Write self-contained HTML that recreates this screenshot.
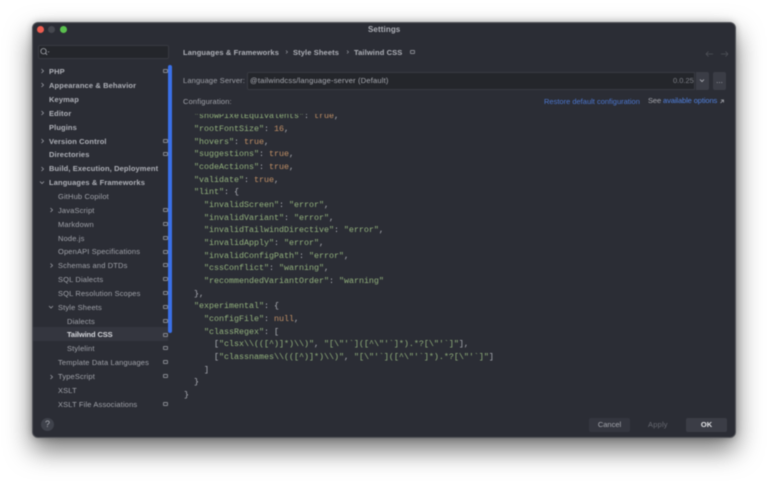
<!DOCTYPE html>
<html><head><meta charset="utf-8"><style>
html,body{margin:0;padding:0;width:768px;height:481px;overflow:hidden;background:#fff}
*{box-sizing:border-box}
#win{position:absolute;left:32px;top:22px;width:704px;height:416px;background:#2b2d35;border-radius:6px;box-shadow:0 12px 26px rgba(0,0,0,.55),0 0 8px rgba(0,0,0,.25);border:1px solid #55575c;overflow:hidden}
#root{position:absolute;left:0;top:0;width:768px;height:481px;filter:blur(.45px);font-family:"Liberation Sans",sans-serif}
.t{position:absolute;white-space:pre;font-size:7.5px;line-height:12px;color:#a8aab1}
.b{font-weight:bold;letter-spacing:.12px;color:#aeb0b7}
.s{letter-spacing:.15px;color:#a0a2a9}
.dot{position:absolute;width:7px;height:7px;border-radius:50%;top:26px}
.m{position:absolute;width:5px;height:4px;border:1px solid #85878e;border-radius:1px;left:163px}
svg{position:absolute;overflow:visible}
#code{position:absolute;font-family:"Liberation Mono",monospace;font-size:8.33px;line-height:12.67px;color:#93b27d;white-space:pre;height:290px;width:500px;overflow:visible}
#code i{font-style:normal;color:#c08f65}
#code u{text-decoration:none;color:#adafb6}
.clip{position:absolute;left:183px;top:114px;width:540px;height:299px;overflow:hidden}
.btn{position:absolute;top:418px;height:14px;border-radius:2px;background:#34363f;text-align:center;font-size:7.5px;line-height:14px;color:#a4a6ad}
</style></head><body><div id="root">
<div id="win"></div>
<div class="dot" style="left:37px;background:#ee5d50"></div>
<div class="dot" style="left:48px;background:#46484f"></div>
<div class="dot" style="left:60px;background:#5ac04e"></div>
<div class="t b" style="left:368px;top:24px;font-size:8px;letter-spacing:.1px">Settings</div>

<div style="position:absolute;left:38px;top:45px;width:131px;height:14px;background:#24262b;border:1px solid #383a41;border-radius:2px"></div>

<div style="position:absolute;left:168px;top:65px;width:4px;height:268px;background:#3a70e8;border-radius:2px"></div>
<div style="position:absolute;left:33px;top:327px;width:135px;height:14px;background:#34363f"></div>

<div class="t b" style="left:49px;top:66px">PHP</div>
<div class="t b" style="left:49px;top:80px">Appearance &amp; Behavior</div>
<div class="t b" style="left:49px;top:94px">Keymap</div>
<div class="t b" style="left:49px;top:108px">Editor</div>
<div class="t b" style="left:49px;top:122px">Plugins</div>
<div class="t b" style="left:49px;top:136px">Version Control</div>
<div class="t b" style="left:49px;top:149px">Directories</div>
<div class="t b" style="left:49px;top:163px">Build, Execution, Deployment</div>
<div class="t b" style="left:49px;top:177px">Languages &amp; Frameworks</div>
<div class="t s" style="left:58px;top:191px">GitHub Copilot</div>
<div class="t s" style="left:58px;top:205px">JavaScript</div>
<div class="t s" style="left:58px;top:219px">Markdown</div>
<div class="t s" style="left:58px;top:233px">Node.js</div>
<div class="t s" style="left:58px;top:246px">OpenAPI Specifications</div>
<div class="t s" style="left:58px;top:260px">Schemas and DTDs</div>
<div class="t s" style="left:58px;top:274px">SQL Dialects</div>
<div class="t s" style="left:58px;top:288px">SQL Resolution Scopes</div>
<div class="t s" style="left:58px;top:302px">Style Sheets</div>
<div class="t s" style="left:67px;top:316px">Dialects</div>
<div class="t b" style="left:67px;top:329px;color:#d5d7dc;letter-spacing:-.12px">Tailwind CSS</div>
<div class="t s" style="left:67px;top:343px">Stylelint</div>
<div class="t s" style="left:58px;top:357px">Template Data Languages</div>
<div class="t s" style="left:58px;top:371px">TypeScript</div>
<div class="t s" style="left:58px;top:385px">XSLT</div>
<div class="t s" style="left:58px;top:399px">XSLT File Associations</div>

<div class="m" style="top:69px"></div>
<div class="m" style="top:139px"></div>
<div class="m" style="top:152px"></div>
<div class="m" style="top:208px"></div>
<div class="m" style="top:222px"></div>
<div class="m" style="top:236px"></div>
<div class="m" style="top:250px"></div>
<div class="m" style="top:263px"></div>
<div class="m" style="top:277px"></div>
<div class="m" style="top:291px"></div>
<div class="m" style="top:305px"></div>
<div class="m" style="top:319px"></div>
<div class="m" style="top:333px"></div>
<div class="m" style="top:346px"></div>
<div class="m" style="top:360px"></div>
<div class="m" style="top:374px"></div>
<div class="m" style="top:402px"></div>

<div style="position:absolute;left:41px;top:418px;width:13px;height:13px;border-radius:50%;background:#3f424b;color:#a4a6ad;font-size:9px;line-height:13px;text-align:center">?</div>

<div class="t b" style="left:183px;top:47px">Languages &amp; Frameworks</div>
<div class="t b" style="left:293px;top:47px">Style Sheets</div>
<div class="t b" style="left:354px;top:47px">Tailwind CSS</div>
<div class="m" style="left:410px;top:50px"></div>

<div class="t s" style="left:183px;top:75px">Language Server:</div>
<div style="position:absolute;left:247px;top:72px;width:448px;height:18px;background:#24262b;border:1px solid #383a41;border-radius:2px 0 0 2px"></div>
<div class="t s" style="left:250px;top:75px;color:#a8aab1;letter-spacing:.2px">@tailwindcss/language-server (Default)</div>
<div class="t" style="left:673px;top:75px;color:#7b7d84">0.0.25</div>
<div style="position:absolute;left:696px;top:72px;width:13px;height:18px;background:#3b3d46;border-radius:0 2px 2px 0"></div>
<div style="position:absolute;left:713px;top:72px;width:13px;height:18px;background:#3b3d46;border-radius:2px;color:#a4a6ad;font-size:8px;line-height:18px;text-align:center">...</div>

<div class="t s" style="left:183px;top:96px">Configuration:</div>
<div class="t" style="left:544px;top:96px;color:#4b76cf">Restore default configuration</div>
<div class="t" style="left:648px;top:95px;color:#a4a6ad;letter-spacing:-.1px">See <span style="color:#5080de">available options</span></div>

<div class="clip"><div id="code" style="left:11px;top:-3.8px">"showPixelEquivalents"<u>:</u> <i>true</i><u>,</u>
"rootFontSize"<u>:</u> <i>16</i><u>,</u>
"hovers"<u>:</u> <i>true</i><u>,</u>
"suggestions"<u>:</u> <i>true</i><u>,</u>
"codeActions"<u>:</u> <i>true</i><u>,</u>
"validate"<u>:</u> <i>true</i><u>,</u>
"lint"<u>: {</u>
  "invalidScreen"<u>:</u> "error"<u>,</u>
  "invalidVariant"<u>:</u> "error"<u>,</u>
  "invalidTailwindDirective"<u>:</u> "error"<u>,</u>
  "invalidApply"<u>:</u> "error"<u>,</u>
  "invalidConfigPath"<u>:</u> "error"<u>,</u>
  "cssConflict"<u>:</u> "warning"<u>,</u>
  "recommendedVariantOrder"<u>:</u> "warning"
<u>},</u>
"experimental"<u>: {</u>
  "configFile"<u>:</u> <i>null</i><u>,</u>
  "classRegex"<u>: [</u>
    <u>[</u>"clsx\\(([^)]*)\\)"<u>,</u> "[\"'`]([^\"'`]*).*?[\"'`]"<u>],</u>
    <u>[</u>"classnames\\(([^)]*)\\)"<u>,</u> "[\"'`]([^\"'`]*).*?[\"'`]"<u>]</u>
  <u>]</u>
<u>}</u>
<u style="position:relative;left:-10px">}</u></div></div>

<div class="btn" style="left:589px;width:41px">Cancel</div>
<div class="t" style="left:648px;top:419px;color:#666870;letter-spacing:.2px">Apply</div>
<div class="btn" style="left:686px;width:41px;background:#3b3d46;color:#e2e3e6;font-weight:bold">OK</div>

<svg style="left:0;top:0" width="768" height="481" fill="none" stroke="#a4a6ad" stroke-width=".8">
<circle cx="43.5" cy="51.2" r="2.7"/><path d="M45.5 53.2l1.6 1.6"/><path d="M47.5 51.5h2l-1 1z" fill="#a4a6ad" stroke="none"/>
<g stroke="#9a9ca3">
<path d="M41.500 69l2 2-2 2M41.500 83l2 2-2 2M41.500 111l2 2-2 2M41.500 139l2 2-2 2M41.500 167l2 2-2 2"/>
<path d="M40 181.500l2 2 2-2"/>
<path d="M50.500 208l2 2-2 2M50.500 263.500l2 2-2 2M50.500 375l2 2-2 2"/>
<path d="M49 306l2 2 2-2"/>
</g>
<g stroke="#85878e"><path d="M286 50.500l1.500 1.500-1.500 1.500M347 50.500l1.500 1.500-1.500 1.500"/></g>
<g stroke="#4f5158"><path d="M706 54h7M706 54l2.500-2.500M706 54l2.500 2.500M721 54h7M728 54l-2.500-2.500M728 54l-2.500 2.500"/></g>
<path d="M700 79.500l2 2 2-2" stroke="#b5b7bd"/>
<path d="M720.500 103l3-3M721 100h2.500v2.500" stroke="#a4a6ad"/>
</svg>
</div></body></html>
